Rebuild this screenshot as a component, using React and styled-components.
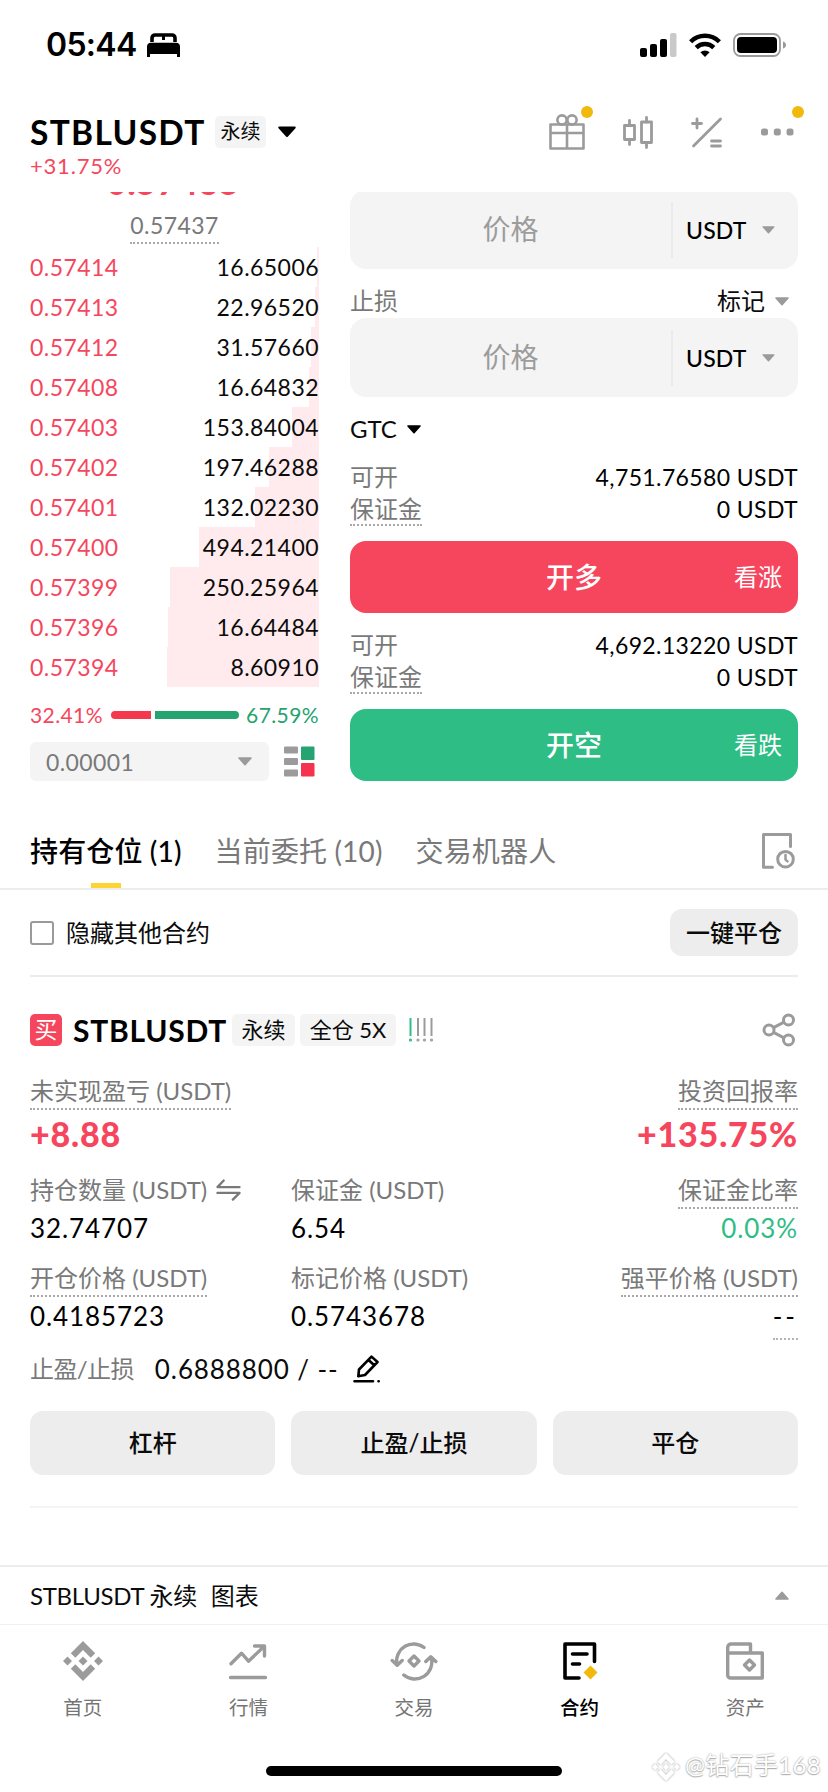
import React from 'react'
import styled, { createGlobalStyle } from 'styled-components'

const RED = '#F6465D'
const GREEN = '#2EBD85'
const GREY = '#9B9B9B'
const LABEL = '#797979'

const GlobalStyle = createGlobalStyle`
  * {
    box-sizing: border-box;
  }

  body {
    margin: 0;
    background: #fff;
    color: #0b0b0b;
    font-family: Lato, "Noto Sans CJK SC", sans-serif;
    font-size: 24px;
    line-height: 32px;
    overflow: hidden;
  }

  svg {
    display: block;
    flex: none;
  }
`

const Screen = styled.div`
  width: 828px;
  height: 1792px;
  display: flex;
  flex-direction: column;
  overflow: hidden;
  white-space: nowrap;
`

const StatusBar = styled.div`
  height: 96px;
  flex: none;
  display: flex;
  align-items: flex-start;
  padding: 33px 42px 0 46px;
`

const Clock = styled.span`
  font-family: Inter, sans-serif;
  font-weight: 600;
  font-size: 32px;
  line-height: 24px;
  letter-spacing: -0.7px;
  width: 101px;
  color: #000;
`

const StatusIcons = styled.div`
  margin-left: auto;
  display: flex;
  gap: 12px;
`

const Header = styled.div`
  height: 96px;
  flex: none;
  display: flex;
  justify-content: space-between;
  padding: 20px 34px 0 30px;
`

const TitleRow = styled.div`
  display: flex;
  align-items: center;
  height: 32px;
`

const Symbol = styled.span`
  font-weight: bold;
  font-size: ${props => props.size}px;
  letter-spacing: ${props => props.spacing}px;
  width: ${props => props.width}px;
  color: #000;
`

const Tag = styled.span`
  height: 32px;
  line-height: 31px;
  width: ${props => props.width}px;
  text-align: center;
  font-size: ${props => props.size}px;
  background: #f4f4f4;
  border-radius: 5px;
`

const Change = styled.div`
  color: ${RED};
  font-size: 22px;
  line-height: 36px;
  letter-spacing: 0.8px;
`

const HeaderIcons = styled.div`
  display: flex;
  align-items: center;
  height: 32px;
  gap: 38px;
`

const BadgeBox = styled.div`
  position: relative;

  &:after {
    content: "";
    position: absolute;
    width: 12px;
    height: 12px;
    border-radius: 50%;
    background: #F0B90B;
    top: ${props => props.top}px;
    right: ${props => props.right}px;
  }
`

const Trade = styled.div`
  height: 616px;
  flex: none;
  display: flex;
  gap: 31px;
  padding: 0 30px;
  overflow: hidden;
`

const Book = styled.div`
  width: 289px;
  margin-top: -28px;
  height: 618px;
`

const LastPrice = styled.div`
  text-align: center;
  padding-bottom: 4px;
  margin-left: -2px;
  color: ${RED};
  font-size: 34px;
  font-weight: 900;
  line-height: 36px;
  letter-spacing: 1px;
`

const MarkPrice = styled.div`
  height: 43px;
  padding-top: 5px;
  display: flex;
  justify-content: center;
  font-size: 23px;
`

const Dotted = styled.span`
  display: block;
  color: ${LABEL};
  line-height: 32px;
  height: ${props => props.height || 35}px;
  border-bottom: 2px dotted #a8a8a8;
  letter-spacing: ${props => props.spacing || 0}px;
`

const BookRow = styled.div`
  height: 40px;
  display: flex;
  justify-content: space-between;
  align-items: center;
  font-size: 23px;
  letter-spacing: 0.45px;
  background: linear-gradient(#FFEBEE, #FFEBEE) no-repeat right / ${props => props.depth}px 100%;
`

const Price = styled.span`
  color: ${RED};
`

const Ratio = styled.div`
  display: flex;
  align-items: center;
  justify-content: space-between;
  height: 55px;
  font-size: 21px;
  letter-spacing: 0.4px;
`

const RatioText = styled.span`
  color: ${props => props.color};
`

const RatioBar = styled.div`
  width: ${props => props.width}px;
  height: 8px;
  background: ${props => props.color};
  border-radius: ${props => props.left ? '4px 0 0 4px' : '0 4px 4px 0'};
`

const Bars = styled.div`
  display: flex;
  gap: 4px;
`

const BookFooter = styled.div`
  display: flex;
  align-items: center;
  justify-content: space-between;
  padding-right: 4px;
`

const StepSelect = styled.div`
  width: 239px;
  height: 39px;
  border-radius: 6px;
  background: #f4f4f4;
  color: ${LABEL};
  display: flex;
  align-items: center;
  justify-content: space-between;
  padding: 0 17px 0 16px;
  font-size: 23px;
  letter-spacing: 0.4px;
`

const Form = styled.div`
  width: 448px;
  margin-top: -2px;
`

const Input = styled.div`
  height: 79px;
  border-radius: 16px;
  background: #f4f4f4;
  display: flex;
  align-items: center;
`

const Placeholder = styled.span`
  flex: 1;
  text-align: center;
  font-size: 28px;
  color: #9c9c9c;
  padding-bottom: 2px;
`

const Unit = styled.div`
  width: 127px;
  height: 56px;
  border-left: 2px solid #ebebeb;
  display: flex;
  align-items: center;
  justify-content: space-between;
  padding: 0 23px 0 13px;
  font-size: 23px;
  font-weight: 500;
  letter-spacing: 0.2px;
  color: #000;
`

const FormRow = styled.div`
  display: flex;
  align-items: center;
  justify-content: space-between;
  height: ${props => props.height}px;
  padding-top: ${props => props.top || 0}px;
`

const Label = styled.span`
  color: ${LABEL};
  letter-spacing: ${props => props.spacing || 0}px;
`

const Picker = styled.div`
  display: flex;
  align-items: center;
  gap: 10px;
  padding-right: ${props => props.right || 0}px;
`

const Amounts = styled.div`
  display: flex;
  justify-content: space-between;
  height: ${props => 80 + props.top}px;
  padding-top: ${props => props.top}px;
`

const AmountList = styled.div`
  text-align: right;
  font-size: 23px;
  letter-spacing: 0.38px;
  color: #000;
`

const OrderButton = styled.div`
  height: 72px;
  border-radius: 16px;
  background: ${props => props.color};
  color: #fff;
  display: grid;
  grid-template-columns: 1fr auto 1fr;
  align-items: center;
  padding: 0 16px;
`

const OrderTitle = styled.span`
  grid-column: 2;
  font-size: 28px;
  font-weight: 500;
`

const OrderHint = styled.span`
  text-align: right;
`

const Tabs = styled.div`
  height: 82px;
  flex: none;
  display: flex;
  align-items: center;
  padding: 5px 33px 0 30px;
  border-bottom: 2px solid #ececec;
`

const Tab = styled.div`
  position: relative;
  font-size: 28px;
  line-height: 76px;
  height: 75px;
  margin-right: 33px;
  letter-spacing: 0.15px;
  color: ${props => props.active ? '#000' : LABEL};
  font-weight: ${props => props.active ? 500 : 400};

  ${props => props.active && `
    &:after {
      content: "";
      position: absolute;
      left: 50%;
      bottom: 0;
      width: 30px;
      height: 5px;
      margin-left: -15px;
      background: #FCD535;
    }
  `}
`

const Push = styled.div`
  margin-left: auto;
  padding-right: ${props => props.right || 0}px;
`

const FilterRow = styled.div`
  height: 87px;
  flex: none;
  margin: 0 30px;
  display: flex;
  align-items: center;
  border-bottom: 2px solid #ececec;
`

const Checkbox = styled.span`
  width: 24px;
  height: 24px;
  border: 2px solid #9a9a9a;
  border-radius: 3px;
  margin-right: 12px;
`

const CloseAll = styled.div`
  margin-left: auto;
  width: 128px;
  height: 47px;
  line-height: 47px;
  border-radius: 12px;
  background: #ededed;
  text-align: center;
  font-weight: 500;
`

const Position = styled.div`
  height: 531px;
  flex: none;
  margin: 0 30px;
  padding-top: 37px;
  border-bottom: 2px solid #f4f4f4;
`

const Side = styled.span`
  width: 32px;
  height: 32px;
  border-radius: 5px;
  background: ${RED};
  color: #fff;
  font-size: 23px;
  line-height: 31px;
  text-align: center;
  margin-right: 11px;
`

const Tags = styled.div`
  display: flex;
  gap: 5px;
  margin-right: 13px;
`

const Pnl = styled.div`
  display: flex;
  justify-content: space-between;
  margin-top: 29px;
  height: 99px;
`

const PnlValue = styled.div`
  color: ${RED};
  font-size: 34px;
  font-weight: 900;
  line-height: 48px;
  letter-spacing: 0.8px;
`

const Stats = styled.div`
  display: grid;
  grid-template-columns: 261px 1fr auto;
  height: ${props => props.height}px;
`

const Stat = styled.div`
  display: flex;
  flex-direction: column;
  align-items: ${props => props.right ? 'flex-end' : 'flex-start'};
`

const StatLabel = styled.div`
  height: 35px;
  color: ${LABEL};
  display: flex;
  align-items: center;
  gap: 9px;
  padding-bottom: 3px;
`

const StatValue = styled.div`
  font-size: 26px;
  line-height: 36px;
  margin-top: 1px;
  letter-spacing: 0.9px;
  color: ${props => props.color || '#000'};
`

const DashValue = styled(StatValue)`
  height: 42px;
  letter-spacing: 3px;
  border-bottom: 2px dotted #b5b5b5;
`

const Stops = styled.div`
  display: flex;
  align-items: center;
  height: 32px;
  margin-bottom: 26px;
`

const StopValue = styled.span`
  font-size: 26px;
  letter-spacing: 0.9px;
  width: 183px;
  margin: 0 15px 0 21px;
`

const Actions = styled.div`
  display: grid;
  grid-template-columns: repeat(3, 1fr);
  gap: 16px;
`

const Action = styled.div`
  height: 64px;
  line-height: 63px;
  border-radius: 13px;
  background: #ededed;
  text-align: center;
  font-weight: 500;
`

const ChartBar = styled.div`
  margin-top: auto;
  height: 60px;
  flex: none;
  border-top: 2px solid #ececec;
  border-bottom: 1px solid #f0f0f0;
  display: flex;
  align-items: center;
  padding: 0 39px 0 30px;
`

const ChartName = styled.span`
  letter-spacing: -0.3px;
  margin-right: 14px;
`

const Nav = styled.div`
  height: 121px;
  flex: none;
  display: grid;
  grid-template-columns: repeat(5, 1fr);
  padding-top: 16px;
`

const NavItem = styled.div`
  display: flex;
  flex-direction: column;
  align-items: center;
  font-size: 19.5px;
  font-weight: ${props => props.active ? 500 : 400};
  color: ${props => props.active ? '#000' : '#757575'};
`

const NavLabel = styled.span`
  margin-top: 11px;
`

const HomeArea = styled.div`
  height: 46px;
  flex: none;
  position: relative;
  padding-top: 20px;
`

const HomeBar = styled.div`
  width: 296px;
  height: 10px;
  border-radius: 5px;
  background: #000;
  margin: 0 auto;
`

const Watermark = styled.div`
  position: absolute;
  right: 7px;
  top: 3px;
  display: flex;
  align-items: center;
  gap: 5px;
  color: #fff;
  font-size: 24px;
  letter-spacing: 0.3px;
  text-shadow: 0 0 2px #999, 0 1px 1px #b5b5b5;

  svg {
    margin-top: 4px;
    filter: drop-shadow(0 0.500px 0.800px #999);
  }
`

const Caret = ({ w = 14, h = 9, color = GREY, up }) => (
  <svg width={w} height={h} viewBox="0 0 14 9">
    <path
      d={up ? 'M1 8h12L7 1.4z' : 'M1 1h12L7 7.6z'}
      fill={color} stroke={color} strokeWidth="1.6" strokeLinejoin="round"
    />
  </svg>
)

const BedIcon = () => (
  <svg width="33" height="24" viewBox="0 0 33 24">
    <path d="M5 9V5a3 3 0 0 1 3-3h17a3 3 0 0 1 3 3v4" fill="none" stroke="#000" strokeWidth="3.6" />
    <path d="M15 2h3v5h-3z" />
    <path d="M0 24V13.500A4 4 0 0 1 4 9.800h25a4 4 0 0 1 4 3.700V24h-3v-3H3v3z" />
  </svg>
)

const SignalIcon = () => (
  <svg width="37" height="24" viewBox="0 0 37 24">
    <rect x="0" y="15" width="7" height="9" rx="2" />
    <rect x="10" y="11" width="7" height="13" rx="2" />
    <rect x="20" y="6" width="7" height="18" rx="2" />
    <rect x="30" y="0" width="6.500" height="24" rx="2" fill="#c9c9c9" />
  </svg>
)

const WifiIcon = () => (
  <svg width="32" height="24" viewBox="0 0 32 24" fill="none" stroke="#000" strokeWidth="4.400">
    <path d="M1.600 8.700a20.500 20.500 0 0 1 28.800 0" />
    <path d="M7.200 14.600a12.400 12.400 0 0 1 17.600 0" />
    <path d="M16 24l-4.600-4.700a6.500 6.500 0 0 1 9.200 0z" fill="#000" stroke="none" />
  </svg>
)

const BatteryIcon = () => (
  <svg width="53" height="24" viewBox="0 0 53 24">
    <rect x="1" y="1" width="46" height="22" rx="6.500" fill="none" stroke="#9a9a9a" strokeWidth="1.800" />
    <rect x="4" y="4" width="40" height="16" rx="4" />
    <path d="M50 8.500q3 1 3 3.500t-3 3.500z" fill="#9a9a9a" />
  </svg>
)

const GiftIcon = () => (
  <svg width="36" height="36" viewBox="0 0 36 36" fill="none" stroke={GREY} strokeWidth="2.600" strokeLinejoin="round">
    <rect x="1.500" y="10.500" width="33" height="24" />
    <path d="M1.500 19h33M18 10v24.500" />
    <circle cx="13" cy="6" r="4.600" />
    <circle cx="23" cy="6" r="4.600" />
  </svg>
)

const CandlesIcon = () => (
  <svg width="30" height="33" viewBox="0 0 30 33" fill="none" stroke={GREY} strokeWidth="2.800" strokeLinejoin="round" strokeLinecap="round">
    <rect x="1.500" y="9.500" width="10" height="14" />
    <path d="M6.500 4.500v5M6.500 23.500v5" />
    <rect x="18.500" y="6" width="10" height="20.500" />
    <path d="M23.500 1.500V6M23.500 26.500v5" />
  </svg>
)

const CalcIcon = () => (
  <svg width="32" height="32" viewBox="0 0 32 32" fill="none" stroke={GREY} strokeWidth="2.800" strokeLinecap="round">
    <path d="M2.500 30L29.500 3M1.500 7.500h9M6 3v9M20.500 25h9M20.500 30h9" />
  </svg>
)

const MoreIcon = () => (
  <svg width="33" height="8" viewBox="0 0 33 8" fill={GREY}>
    <rect x="0" y="0.500" width="7" height="7" rx="2.500" />
    <rect x="12.800" y="0.500" width="7" height="7" rx="2.500" />
    <rect x="25.500" y="0.500" width="7" height="7" rx="2.500" />
  </svg>
)

const BookIcon = () => (
  <svg width="31" height="31" viewBox="0 0 31 31" fill={GREY}>
    <rect x="0" y="0.500" width="14" height="7" rx="1" />
    <rect x="0" y="12" width="14" height="7" rx="1" />
    <rect x="0" y="23.500" width="14" height="7" rx="1" />
    <rect x="17" y="0.500" width="13.500" height="13.500" rx="1" fill="#25A370" />
    <rect x="17" y="17" width="13.500" height="13.500" rx="1" fill="#F6334F" />
  </svg>
)

const HistoryIcon = () => (
  <svg width="33" height="36" viewBox="0 0 33 36" fill="none" stroke={GREY} strokeWidth="3" strokeLinecap="round" strokeLinejoin="round">
    <path d="M28.500 13.500V1.600H1.500V34.200h9" />
    <circle cx="23.500" cy="26.200" r="7.800" />
    <path d="M23.500 22v4.600l2 1.800" strokeWidth="2.500" />
  </svg>
)

const RiskIcon = () => (
  <svg width="25" height="24" viewBox="0 0 25 24" strokeWidth="2">
    {[1, 8.5, 15, 22].map((x, i) => (
      <g key={x} stroke={i ? GREY : GREEN} fill={i ? GREY : GREEN}>
        <path d={`M${x + 0.5} 0v18`} />
        <circle cx={x + 0.5} cy="22" r="0.600" />
      </g>
    ))}
  </svg>
)

const ShareIcon = () => (
  <svg width="33" height="34" viewBox="0 0 33 34" fill="none" stroke={GREY} strokeWidth="3">
    <circle cx="7" cy="17" r="5" />
    <circle cx="26.500" cy="7" r="5" />
    <circle cx="26.500" cy="27" r="5" />
    <path d="M11.500 14.700l10.500-5.500M11.500 19.300l10.500 5.500" />
  </svg>
)

const SwapIcon = () => (
  <svg width="25" height="22" viewBox="0 0 26 22" fill="none" stroke={LABEL} strokeWidth="2.400" strokeLinecap="round" strokeLinejoin="round">
    <path d="M24.500 8H1.500L8 1.200M1.500 14h23L17.500 21" />
  </svg>
)

const EditIcon = () => (
  <svg width="28" height="28" viewBox="0 0 28 28" fill="none" stroke="#000" strokeWidth="2.600" strokeLinejoin="round" strokeLinecap="round">
    <path d="M6 14.500L18.500 1.600l6 5.400L12 20l-6.700 1.300zM15.500 5l5.800 5.300" />
    <path d="M1.500 26.200h18.500M25.500 26.200h.2" />
  </svg>
)

const HomeLogo = ({ size = 40, color = GREY }) => (
  <svg width={size} height={size} viewBox="0 0 40 40" fill={color}>
    <path d="M20 0l12.200 12.200-4.500 4.500L20 9l-7.700 7.700-4.500-4.500zM20 40L7.800 27.800l4.500-4.500L20 31l7.700-7.700 4.500 4.500z" />
    <path d="M20 15.500l4.500 4.500-4.500 4.500-4.500-4.500zM4.500 15.500L9 20l-4.500 4.500L0 20zM35.500 15.500L40 20l-4.500 4.500L31 20z" />
  </svg>
)

const MarketsIcon = () => (
  <svg width="40" height="40" viewBox="0 0 40 40" fill="none" stroke={GREY} strokeWidth="3.400" strokeLinecap="round" strokeLinejoin="round">
    <path d="M3 22.800l10.500-10.600 7 8L36 5.500M26.500 5h10v10M2.500 36.500h35" />
  </svg>
)

const TradeIcon = () => (
  <svg width="48" height="40" viewBox="0 0 48 40" fill="none" stroke={GREY} strokeWidth="3.400" strokeLinecap="round" strokeLinejoin="round">
    <path d="M34 6.500A17 17 0 0 0 6.800 22.500M2.200 19.500l5 4.800 5-4.800" />
    <path d="M13.800 34A17 17 0 0 0 41.200 16.500M45.800 20.500l-5-4.800-5 4.800" />
    <path d="M24 15l5 5-5 5-5-5z" />
  </svg>
)

const FuturesIcon = () => (
  <svg width="36" height="40" viewBox="0 0 36 40" fill="none" stroke="#000" strokeWidth="3.600" strokeLinecap="round" strokeLinejoin="round">
    <path d="M32.500 20.500V3H3v34h14M10.500 13h14.500M10.500 23h7" />
    <path d="M28.500 24.500l7 7-7 7-7-7z" fill="#F0B90B" stroke="none" />
  </svg>
)

const AssetsIcon = () => (
  <svg width="40" height="40" viewBox="0 0 40 40" fill="none" stroke={GREY} strokeWidth="3.400" strokeLinecap="round" strokeLinejoin="round">
    <path d="M2.700 12h34.600v25H5.500a2.800 2.800 0 0 1-2.800-2.800V6.500Q2.700 3 6.200 3h19.300v9" />
    <path d="M24.500 19l5 5-5 5-5-5z" />
  </svg>
)

const asks = [
  ['0.57414', '16.65006', 2],
  ['0.57413', '22.96520', 4],
  ['0.57412', '31.57660', 8],
  ['0.57408', '16.64832', 10],
  ['0.57403', '153.84004', 27],
  ['0.57402', '197.46288', 50],
  ['0.57401', '132.02230', 64],
  ['0.57400', '494.21400', 120],
  ['0.57399', '250.25964', 149],
  ['0.57396', '16.64484', 151],
  ['0.57394', '8.60910', 152],
]

const navItems = [
  { label: '首页', icon: <HomeLogo /> },
  { label: '行情', icon: <MarketsIcon /> },
  { label: '交易', icon: <TradeIcon /> },
  { label: '合约', icon: <FuturesIcon />, active: true },
  { label: '资产', icon: <AssetsIcon /> },
]

const PriceInput = () => (
  <Input>
    <Placeholder>价格</Placeholder>
    <Unit>USDT <Caret w={13} h={8} /></Unit>
  </Input>
)

const OpenAmounts = ({ max, top = 0 }) => (
  <Amounts top={top}>
    <div>
      <Label>可开</Label>
      <Dotted height={33}>保证金</Dotted>
    </div>
    <AmountList>
      <div>{max} USDT</div>
      <div>0 USDT</div>
    </AmountList>
  </Amounts>
)

const OrderBook = () => (
  <Book>
    <LastPrice>0.57435</LastPrice>
    <MarkPrice><Dotted spacing={0.4}>0.57437</Dotted></MarkPrice>
    {asks.map(([price, amount, depth]) => (
      <BookRow key={price} depth={depth}>
        <Price>{price}</Price>
        <span>{amount}</span>
      </BookRow>
    ))}
    <Ratio>
      <RatioText color={RED}>32.41%</RatioText>
      <Bars>
        <RatioBar left width={40} color="#F6384F" />
        <RatioBar width={84} color="#25A370" />
      </Bars>
      <RatioText color="#25A370">67.59%</RatioText>
    </Ratio>
    <BookFooter>
      <StepSelect>0.00001 <Caret /></StepSelect>
      <BookIcon />
    </BookFooter>
  </Book>
)

const OrderForm = () => (
  <Form>
    <PriceInput />
    <FormRow height={49} top={15}>
      <Label>止损</Label>
      <Picker right={9}>标记 <Caret /></Picker>
    </FormRow>
    <PriceInput />
    <FormRow height={64}>
      <Picker>GTC <Caret color="#000" /></Picker>
    </FormRow>
    <OpenAmounts max="4,751.76580" />
    <OrderButton color={RED}>
      <OrderTitle>开多</OrderTitle>
      <OrderHint>看涨</OrderHint>
    </OrderButton>
    <OpenAmounts max="4,692.13220" top={16} />
    <OrderButton color={GREEN}>
      <OrderTitle>开空</OrderTitle>
      <OrderHint>看跌</OrderHint>
    </OrderButton>
  </Form>
)

export default () => (
  <Screen>
    <GlobalStyle />
    <StatusBar>
      <Clock>05:44</Clock>
      <BedIcon />
      <StatusIcons>
        <SignalIcon />
        <WifiIcon />
        <BatteryIcon />
      </StatusIcons>
    </StatusBar>
    <Header>
      <div>
        <TitleRow>
          <Symbol size={33.5} spacing={1.3} width={185}>STBLUSDT</Symbol>
          <Picker right={12}><Tag width={51} size={20}>永续</Tag></Picker>
          <Caret w={18} h={12} color="#000" />
        </TitleRow>
        <Change>+31.75%</Change>
      </div>
      <HeaderIcons>
        <BadgeBox top={-8} right={-8}><GiftIcon /></BadgeBox>
        <CandlesIcon />
        <CalcIcon />
        <BadgeBox top={-22} right={-10}><MoreIcon /></BadgeBox>
      </HeaderIcons>
    </Header>
    <Trade>
      <OrderBook />
      <OrderForm />
    </Trade>
    <Tabs>
      <Tab active>持有仓位 (1)</Tab>
      <Tab>当前委托 (10)</Tab>
      <Tab>交易机器人</Tab>
      <Push><HistoryIcon /></Push>
    </Tabs>
    <FilterRow>
      <Checkbox />
      隐藏其他合约
      <CloseAll>一键平仓</CloseAll>
    </FilterRow>
    <Position>
      <TitleRow>
        <Side>买</Side>
        <Symbol size={30} spacing={0.75} width={159}>STBLUSDT</Symbol>
        <Tags>
          <Tag width={63} size={22}>永续</Tag>
          <Tag width={96} size={22}>全仓 5X</Tag>
        </Tags>
        <RiskIcon />
        <Push right={3}><ShareIcon /></Push>
      </TitleRow>
      <Pnl>
        <Stat>
          <Dotted>未实现盈亏 (USDT)</Dotted>
          <PnlValue>+8.88</PnlValue>
        </Stat>
        <Stat right>
          <Dotted>投资回报率</Dotted>
          <PnlValue>+135.75%</PnlValue>
        </Stat>
      </Pnl>
      <Stats height={88}>
        <Stat>
          <StatLabel>持仓数量 (USDT) <SwapIcon /></StatLabel>
          <StatValue>32.74707</StatValue>
        </Stat>
        <Stat>
          <StatLabel>保证金 (USDT)</StatLabel>
          <StatValue>6.54</StatValue>
        </Stat>
        <Stat right>
          <Dotted>保证金比率</Dotted>
          <StatValue color={GREEN}>0.03%</StatValue>
        </Stat>
      </Stats>
      <Stats height={91}>
        <Stat>
          <Dotted>开仓价格 (USDT)</Dotted>
          <StatValue>0.4185723</StatValue>
        </Stat>
        <Stat>
          <StatLabel>标记价格 (USDT)</StatLabel>
          <StatValue>0.5743678</StatValue>
        </Stat>
        <Stat right>
          <Dotted>强平价格 (USDT)</Dotted>
          <DashValue>--</DashValue>
        </Stat>
      </Stats>
      <Stops>
        <Label spacing={-0.6}>止盈/止损</Label>
        <StopValue>0.6888800 / --</StopValue>
        <EditIcon />
      </Stops>
      <Actions>
        <Action>杠杆</Action>
        <Action>止盈/止损</Action>
        <Action>平仓</Action>
      </Actions>
    </Position>
    <ChartBar>
      <ChartName>STBLUSDT 永续</ChartName>
      图表
      <Push><Caret up /></Push>
    </ChartBar>
    <Nav>
      {navItems.map(item => (
        <NavItem key={item.label} active={item.active}>
          {item.icon}
          <NavLabel>{item.label}</NavLabel>
        </NavItem>
      ))}
    </Nav>
    <HomeArea>
      <HomeBar />
      <Watermark><HomeLogo size={28} color="#fff" /> @钻石手168</Watermark>
    </HomeArea>
  </Screen>
)
